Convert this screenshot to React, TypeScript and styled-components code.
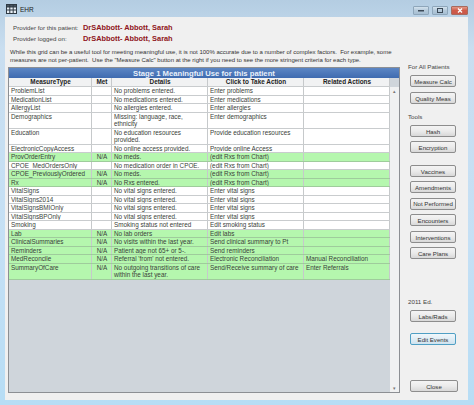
import React from 'react';
import styled, { createGlobalStyle } from 'styled-components';

const GlobalStyle = createGlobalStyle`
  html, body {
    margin: 0;
    padding: 0;
    background: #a9d6ee;
    overflow: hidden;
  }
  * { box-sizing: border-box; }
`;

const Window = styled.div`
  width: 474px;
  height: 405px;
  display: flex;
  flex-direction: column;
  padding: 1px 6px 5px 5px;
  background: linear-gradient(180deg, #b4cde2 0%, #c9def0 12%, #c5e0f5 60%, #b7ddf5 100%);
  font-family: 'Liberation Sans', Arial, sans-serif;
  color: #333;
`;

const TitleBar = styled.div`
  height: 16px;
  flex: none;
  display: flex;
  align-items: center;
  gap: 3px;
  padding-left: 1px;
`;

const TitleText = styled.span`
  font-size: 6.5px;
  color: #222;
  flex: 1;
`;

const WinButton = styled.div<{ $close?: boolean }>`
  width: ${({ $close }) => ($close ? '17px' : '16px')};
  height: 9px;
  margin-top: 2px;
  display: flex;
  align-items: center;
  justify-content: center;
  border: 1px solid ${({ $close }) => ($close ? '#a86a5e' : '#8ea6ba')};
  border-radius: 1px;
  background: ${({ $close }) =>
    $close
      ? 'linear-gradient(180deg, #e29a8a 0%, #cf5a48 50%, #c9584a 100%)'
      : 'linear-gradient(180deg, #d3e2ee 0%, #b4c9da 50%, #a7bfd3 100%)'};
`;

const Client = styled.div`
  flex: 1;
  min-height: 0;
  background: #f0f0f0;
  display: flex;
  flex-direction: column;
  padding: 0 0 7px 3px;
`;

const Provider = styled.div`
  display: flex;
  flex-direction: column;
  gap: 4px;
  padding: 7px 0 0 5px;
`;

const ProviderRow = styled.div`
  display: flex;
  align-items: center;
  height: 7px;
  font-size: 6.2px;
  color: #444;
`;

const ProviderLabel = styled.span`
  width: 70px;
`;

const ProviderName = styled.span`
  font-weight: 700;
  font-size: 7.4px;
  color: #8f1420;
`;

const Intro = styled.p`
  margin: 6px 0 0 2px;
  font-size: 6px;
  line-height: 8px;
  width: 390px;
  color: #333;
  white-space: nowrap;
`;

const Body = styled.div`
  flex: 1;
  min-height: 0;
  display: flex;
  margin-top: 3px;
`;

const Grid = styled.div`
  width: 392px;
  flex: none;
  display: flex;
  flex-direction: column;
  background: #cfd5db;
  border: 1px solid #8c8f94;
`;

const GridTitle = styled.div`
  height: 10px;
  flex: none;
  display: flex;
  align-items: center;
  justify-content: center;
  background: linear-gradient(180deg, #5c86c4 0%, #3f6bb0 100%);
  color: #e8f0fa;
  font-size: 7.7px;
  font-weight: 700;
`;

const GridMain = styled.div`
  flex: 1;
  min-height: 0;
  display: flex;
`;

const Rows = styled.div`
  flex: 1;
  display: flex;
  flex-direction: column;
`;

const Scrollbar = styled.div`
  width: 9px;
  flex: none;
  margin-top: 9px;
  display: flex;
  flex-direction: column;
  justify-content: space-between;
  align-items: center;
  background: #f0f1f2;
  color: #777;
  font-size: 5px;
  line-height: 8px;
`;

const Row = styled.div<{ $h: number; $na?: boolean; $head?: boolean }>`
  height: ${({ $h }) => $h}px;
  flex: none;
  display: grid;
  grid-template-columns: 83px 20px 96px 96px 86px;
  background: ${({ $na, $head }) => ($head ? '#f1f2f3' : $na ? '#b5f7ae' : '#ffffff')};
  border-bottom: 1px solid ${({ $na }) => ($na ? '#9fcc9c' : '#c9ccce')};
`;

const Cell = styled.div<{ $head?: boolean; $center?: boolean }>`
  padding: 0 1px 0 2px;
  border-right: 1px solid #c6c9cb;
  overflow: hidden;
  white-space: pre-line;
  font-size: ${({ $head }) => ($head ? '6.4px' : '6.35px')};
  font-weight: ${({ $head }) => ($head ? 700 : 400)};
  line-height: 7.6px;
  color: ${({ $head }) => ($head ? '#222' : '#3a3f3a')};
  text-align: ${({ $head, $center }) => ($head || $center ? 'center' : 'left')};
`;

const Side = styled.div`
  flex: 1;
  display: flex;
  flex-direction: column;
  padding: 0 0 0 8px;
`;

const SideLabel = styled.div<{ $top: number }>`
  margin-top: ${({ $top }) => $top}px;
  height: 8px;
  font-size: 6.2px;
  line-height: 8px;
  color: #444;
`;

const SideButton = styled.div<{ $top: number; $focus?: boolean; $wide?: boolean }>`
  margin-top: ${({ $top }) => $top}px;
  margin-left: 2px;
  width: ${({ $wide }) => ($wide ? '48px' : '46px')};
  height: 12px;
  flex: none;
  display: flex;
  align-items: center;
  justify-content: center;
  font-size: 6.1px;
  color: #333;
  white-space: nowrap;
  border: 1px solid ${({ $focus }) => ($focus ? '#4f9fc4' : '#8d8d8d')};
  border-radius: 2px;
  background: ${({ $focus }) =>
    $focus
      ? 'linear-gradient(180deg, #f0f7fb 0%, #e0edf5 50%, #cfe3ef 100%)'
      : 'linear-gradient(180deg, #f4f4f4 0%, #ebebeb 50%, #d8d8d8 100%)'};
`;

const GridIcon = () => (
  <svg width="11" height="10" viewBox="0 0 11 10">
    <rect x="0.5" y="0.5" width="10" height="9" fill="#e8eef4" stroke="#2f3a44" />
    <rect x="0.5" y="0.5" width="10" height="2.5" fill="#4a5560" stroke="#2f3a44" />
    <path d="M3.8 0.5V9.5M7.2 0.5V9.5M0.5 6H10.5" stroke="#2f3a44" strokeWidth="1" />
  </svg>
);

type Measure = { name: string; met?: string; details?: string; action?: string; related?: string; h?: number };

const measures: Measure[] = [
  { name: 'ProblemList', details: 'No problems entered.', action: 'Enter problems' },
  { name: 'MedicationList', details: 'No medications entered.', action: 'Enter medications' },
  { name: 'AllergyList', details: 'No allergies entered.', action: 'Enter allergies' },
  { name: 'Demographics', details: 'Missing: language, race,\nethnicity', action: 'Enter demographics', h: 16 },
  { name: 'Education', details: 'No education resources\nprovided.', action: 'Provide education resources', h: 16 },
  { name: 'ElectronicCopyAccess', details: 'No online access provided.', action: 'Provide online Access' },
  { name: 'ProvOrderEntry', met: 'N/A', details: 'No meds.', action: '(edit Rxs from Chart)' },
  { name: 'CPOE_MedOrdersOnly', details: 'No medication order in CPOE.', action: '(edit Rxs from Chart)' },
  { name: 'CPOE_PreviouslyOrdered', met: 'N/A', details: 'No meds.', action: '(edit Rxs from Chart)' },
  { name: 'Rx', met: 'N/A', details: 'No Rxs entered.', action: '(edit Rxs from Chart)' },
  { name: 'VitalSigns', details: 'No vital signs entered.', action: 'Enter vital signs' },
  { name: 'VitalSigns2014', details: 'No vital signs entered.', action: 'Enter vital signs' },
  { name: 'VitalSignsBMIOnly', details: 'No vital signs entered.', action: 'Enter vital signs' },
  { name: 'VitalSignsBPOnly', details: 'No vital signs entered.', action: 'Enter vital signs' },
  { name: 'Smoking', details: 'Smoking status not entered', action: 'Edit smoking status' },
  { name: 'Lab', met: 'N/A', details: 'No lab orders', action: 'Edit labs' },
  { name: 'ClinicalSummaries', met: 'N/A', details: 'No visits within the last year.', action: 'Send clinical summary to Pt' },
  { name: 'Reminders', met: 'N/A', details: 'Patient age not 65+ or 5-.', action: 'Send reminders' },
  { name: 'MedReconcile', met: 'N/A', details: "Referral 'from' not entered.", action: 'Electronic Reconciliation', related: 'Manual Reconciliation' },
  { name: 'SummaryOfCare', met: 'N/A', details: 'No outgoing transitions of care\nwithin the last year.', action: 'Send/Receive summary of care', related: 'Enter Referrals', h: 16 },
];

const App: React.FC = () => (
  <Window>
    <GlobalStyle />
    <TitleBar>
      <GridIcon />
      <TitleText>EHR</TitleText>
      <WinButton>
        <svg width="6" height="3" viewBox="0 0 6 3"><rect y="1" width="6" height="1.5" fill="#3c4a58" /></svg>
      </WinButton>
      <WinButton>
        <svg width="6" height="5" viewBox="0 0 6 5"><rect x="0.5" y="0.5" width="5" height="4" fill="none" stroke="#3c4a58" /></svg>
      </WinButton>
      <WinButton $close>
        <svg width="6" height="5" viewBox="0 0 6 5"><path d="M1 0.5L5 4.5M5 0.5L1 4.5" stroke="#fff" strokeWidth="1.3" /></svg>
      </WinButton>
    </TitleBar>
    <Client>
      <Provider>
        <ProviderRow>
          <ProviderLabel>Provider for this patient:</ProviderLabel>
          <ProviderName>DrSAbbott- Abbott, Sarah</ProviderName>
        </ProviderRow>
        <ProviderRow>
          <ProviderLabel>Provider logged on:</ProviderLabel>
          <ProviderName>DrSAbbott- Abbott, Sarah</ProviderName>
        </ProviderRow>
      </Provider>
      <Intro>
        While this grid can be a useful tool for meeting meaningful use, it is not 100% accurate due to a number of complex factors.&nbsp; For example, some
        <br />
        measures are not per-patient.&nbsp; Use the "Measure Calc" button at the right if you need to see the more stringent criteria for each type.
      </Intro>
      <Body>
        <Grid>
          <GridTitle>Stage 1 Meaningful Use for this patient</GridTitle>
          <GridMain>
            <Rows>
              <Row $h={9} $head>
                <Cell $head>MeasureType</Cell>
                <Cell $head>Met</Cell>
                <Cell $head>Details</Cell>
                <Cell $head>Click to Take Action</Cell>
                <Cell $head>Related Actions</Cell>
              </Row>
              {measures.map((m) => (
                <Row key={m.name} $h={m.h ?? 8.5} $na={m.met === 'N/A'}>
                  <Cell>{m.name}</Cell>
                  <Cell $center>{m.met}</Cell>
                  <Cell>{m.details}</Cell>
                  <Cell>{m.action}</Cell>
                  <Cell>{m.related}</Cell>
                </Row>
              ))}
            </Rows>
            <Scrollbar>
              <span>▴</span>
              <span>▾</span>
            </Scrollbar>
          </GridMain>
        </Grid>
        <Side>
          <SideLabel $top={-4}>For All Patients</SideLabel>
          <SideButton $top={4}>Measure Calc</SideButton>
          <SideButton $top={5}>Quality Meas</SideButton>
          <SideLabel $top={9}>Tools</SideLabel>
          <SideButton $top={4}>Hash</SideButton>
          <SideButton $top={4}>Encryption</SideButton>
          <SideButton $top={12}>Vaccines</SideButton>
          <SideButton $top={4}>Amendments</SideButton>
          <SideButton $top={4.5}>Not Performed</SideButton>
          <SideButton $top={4.5}>Encounters</SideButton>
          <SideButton $top={5}>Interventions</SideButton>
          <SideButton $top={4}>Care Plans</SideButton>
          <SideLabel $top={39}>2011 Ed.</SideLabel>
          <SideButton $top={4}>Labs/Rads</SideButton>
          <SideButton $top={11} $focus>Edit Events</SideButton>
          <SideButton $top={35} $wide>Close</SideButton>
        </Side>
      </Body>
    </Client>
  </Window>
);

export default App;
